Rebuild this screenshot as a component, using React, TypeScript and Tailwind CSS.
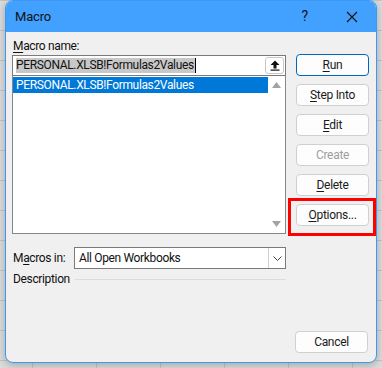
import { useState } from 'react';

const font = { fontFamily: 'Roboto, "Noto Sans", sans-serif' };

function DlgButton({
  label,
  mnemonic,
  isDefault,
  disabled,
}: {
  label: string;
  mnemonic?: number;
  isDefault?: boolean;
  disabled?: boolean;
}) {
  const i = mnemonic ?? -1;
  return (
    <button
      disabled={disabled}
      className={
        'h-[22px] w-[73px] rounded-[4px] border bg-[#fdfdfd] text-[12px] tracking-[-0.3px] leading-none ' +
        (isDefault ? 'border-[#0067c0] ' : 'border-[#d0d0d0] ') +
        (disabled ? 'text-[#9d9d9d]' : 'text-[#1b1b1b]')
      }
    >
      {i >= 0 ? (
        <>
          {label.slice(0, i)}
          <span className="underline underline-offset-2">{label[i]}</span>
          {label.slice(i + 1)}
        </>
      ) : (
        label
      )}
    </button>
  );
}

export default function App() {
  const [name] = useState('PERSONAL.XLSB!Formulas2Values');

  return (
    <div
      className="w-[382px] h-[368px] overflow-hidden bg-[#dcdcdc] bg-[linear-gradient(#c4c4c4_1px,transparent_1px),linear-gradient(90deg,#c4c4c4_1px,transparent_1px)] bg-[size:64px_30px] bg-[position:32px_0px] pl-[5px]"
      style={font}
    >
      <div className="relative w-[372px] h-[363px] rounded-[8px] border border-[#3d98f5] bg-[#f0f0f0] overflow-hidden shadow-[0_2px_8px_rgba(0,0,0,0.25)] flex flex-col">
        {/* title bar */}
        <div className="h-[31px] bg-[#42a0ff] flex items-center pl-[9px] text-[13px] tracking-[-0.2px] text-[#111]">
          <span>Macro</span>
          <span className="ml-auto mr-[38px] text-[14px]">?</span>
          <svg width="12" height="12" viewBox="0 0 12 12" className="mr-[18px]">
            <path d="M1 1L11 11M11 1L1 11" stroke="#111" strokeWidth="1.1" />
          </svg>
        </div>

        <div className="flex pt-[6px] pl-[6px]">
          {/* left column */}
          <div className="w-[274px] flex flex-col text-[12px] tracking-[-0.35px] text-[#111]">
            <div className="h-[17px] leading-[16px] pl-[1px]">
              <span className="underline underline-offset-2">M</span>acro name:
            </div>
            <div className="h-[21px] border border-[#7a7a7a] bg-white flex items-center pl-[3px] pr-[1px]">
              <span className="bg-[#c8c8c8] leading-[15px] pr-[1px]">{name}</span>
              <span className="w-px h-[15px] bg-black" />
              <div className="ml-auto w-[19px] h-[17px] rounded-[3px] border border-[#c8c8c8] flex items-center justify-center">
                <svg width="10" height="11" viewBox="0 0 10 11">
                  <path d="M5 0.5L9.5 5H6.5V8.5H3.5V5H0.5Z" fill="#111" />
                  <rect x="0.5" y="9.5" width="9" height="1.2" fill="#111" />
                </svg>
              </div>
            </div>
            <div className="h-[159px] -mt-px border border-[#828790] border-t-[#7a7a7a] bg-white flex">
              <div className="flex-1">
                <div className="h-[16px] bg-[#0078d7] text-white leading-[16px] pl-[3px] mt-px">
                  PERSONAL.XLSB!Formulas2Values
                </div>
              </div>
              <div className="w-[17px] flex flex-col items-center justify-between py-[6px]">
                <svg width="9" height="6" viewBox="0 0 9 6">
                  <path d="M4.5 0L9 6H0Z" fill="#a3a3a3" />
                </svg>
                <svg width="9" height="6" viewBox="0 0 9 6">
                  <path d="M0 0H9L4.5 6Z" fill="#a3a3a3" />
                </svg>
              </div>
            </div>

            <div className="mt-[13px] flex items-center">
              <div className="w-[62px] pl-[1px]">
                M<span className="underline underline-offset-2">a</span>cros in:
              </div>
              <div className="flex-1 h-[22px] border border-[#7a7a7a] bg-white flex items-center pl-[4px]">
                <span>All Open Workbooks</span>
                <div className="ml-auto w-[17px] h-full border-l border-[#d0d0d0] flex items-center justify-center">
                  <svg width="9" height="5" viewBox="0 0 9 5">
                    <path d="M0.5 0.5L4.5 4.5L8.5 0.5" fill="none" stroke="#444" strokeWidth="1" />
                  </svg>
                </div>
              </div>
            </div>

            <div className="mt-[1px] flex items-center h-[18px]">
              <span className="pl-[1px]">Description</span>
              <div className="flex-1 ml-[5px] h-px bg-[#dcdcdc]" />
            </div>
          </div>

          {/* right column */}
          <div className="ml-[10px] pt-[16px] flex flex-col gap-[8px]">
            <DlgButton label="Run" mnemonic={0} isDefault />
            <DlgButton label="Step Into" mnemonic={0} />
            <DlgButton label="Edit" mnemonic={0} />
            <DlgButton label="Create" disabled />
            <DlgButton label="Delete" mnemonic={0} />
            <DlgButton label="Options..." mnemonic={0} />
          </div>
        </div>

        <div className="mt-auto mb-[9px] flex justify-end pr-[8px]">
          <DlgButton label="Cancel" />
        </div>

        {/* highlight box */}
        <div className="absolute left-[282px] top-[197px] w-[88px] h-[38px] border-[3px] border-[#ff0000]" />
      </div>
    </div>
  );
}
